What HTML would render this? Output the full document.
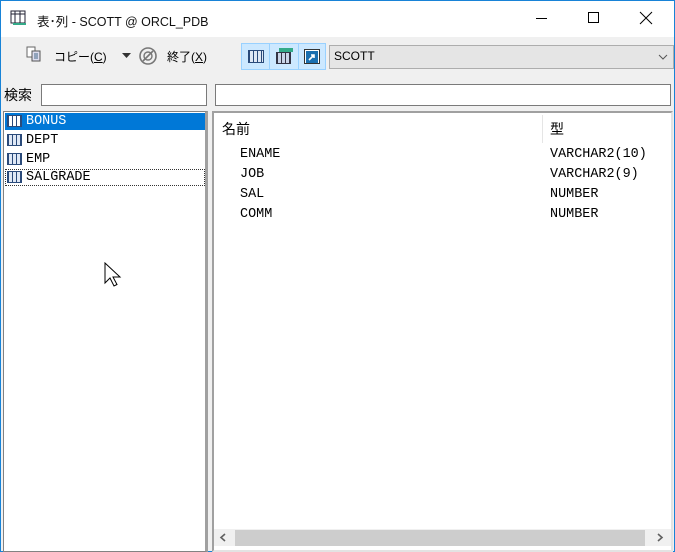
<!DOCTYPE html>
<html><head><meta charset="utf-8"><style>
*{box-sizing:border-box;margin:0;padding:0}
body{width:675px;height:552px;overflow:hidden;background:#fff;font-family:"Liberation Sans","Noto Sans CJK JP",sans-serif;position:relative}
.win{position:absolute;left:0;top:0;width:675px;height:552px;border:1px solid #1883d7;background:#f0f0f0}
.abs{position:absolute}
.title{left:0;top:0;width:673px;height:36px;background:#fff}
.t{font-size:12px;color:#000;white-space:nowrap}
.mono{font-family:"Liberation Mono","Noto Sans CJK JP",monospace;font-size:14px;transform:scaleX(.96);transform-origin:left;white-space:nowrap;line-height:17px}
.tbi{width:12px;height:11px;border:1px solid #2a4a7a;background:repeating-linear-gradient(90deg,#2a4a7a 0 1px,#dfe8f5 1px 4px)}
</style></head><body>
<div class="win">
<div class="abs title"></div>
<svg class="abs" style="left:9px;top:9px" width="18" height="16"><rect x="1" y="1" width="14" height="12" fill="#fff" stroke="#223"/><path d="M1 4h14M5 1v12M10 1v12" stroke="#223"/><rect x="3" y="13" width="13" height="2" fill="#3a8"/></svg>
<div class="abs t" style="left:36px;top:10px;font-size:12.5px;color:#111">表･列 - SCOTT @ ORCL_PDB</div>
<div class="abs" style="left:535px;top:17px;width:11px;height:1px;background:#000"></div>
<div class="abs" style="left:587px;top:11px;width:11px;height:11px;border:1px solid #000"></div>
<svg class="abs" style="left:638px;top:10px" width="14" height="14"><path d="M1 1L13 13M13 1L1 13" stroke="#000"/></svg>

<svg class="abs" style="left:25px;top:45px" width="16" height="16"><rect x="1" y="1" width="8" height="10" fill="#fff" stroke="#666"/><rect x="6" y="5" width="8" height="10" fill="#dde" stroke="#555"/><path d="M8 8h4M8 10h4M8 12h4" stroke="#468"/></svg>
<div class="abs t" style="left:53px;top:47px">コピー(<u>C</u>)</div>
<svg class="abs" style="left:121px;top:52px" width="9" height="6"><path d="M0 0h9L4.5 5z" fill="#333"/></svg>
<svg class="abs" style="left:137px;top:45px" width="20" height="20"><circle cx="10" cy="10" r="8" fill="none" stroke="#777" stroke-width="1.6"/><circle cx="10" cy="10" r="4" fill="none" stroke="#777" stroke-width="1.4"/><path d="M5 15L15 5" stroke="#777" stroke-width="1.6"/></svg>
<div class="abs t" style="left:166px;top:47px">終了(<u>X</u>)</div>
<div class="abs" style="left:240px;top:42px;width:85px;height:27px;background:#cce8ff;border:1px solid #99d1ff"></div>
<div class="abs" style="left:268px;top:43px;width:1px;height:25px;background:#99d1ff"></div>
<div class="abs" style="left:297px;top:43px;width:1px;height:25px;background:#99d1ff"></div>
<div class="abs tbi" style="left:247px;top:49px;width:16px;height:13px"></div>
<div class="abs tbi" style="left:275px;top:51px;width:15px;height:12px;border-color:#334;background:repeating-linear-gradient(90deg,#334 0 1px,#c9d4e8 1px 4px)"></div>
<div class="abs" style="left:278px;top:47px;width:14px;height:4px;background:#3a8"></div>
<div class="abs" style="left:303px;top:48px;width:16px;height:15px;border:1px solid #333;background:#fff"></div>
<svg class="abs" style="left:305px;top:50px" width="12" height="12"><rect width="12" height="12" fill="#1a6fb0"/><path d="M3 9L8 4M5 4h3v3" stroke="#fff" stroke-width="1.6" fill="none"/></svg>
<div class="abs" style="left:328px;top:44px;width:345px;height:24px;background:#e5e5e5;border:1px solid #adadad"></div>
<div class="abs t" style="left:333px;top:48px">SCOTT</div>
<svg class="abs" style="left:657px;top:53px" width="10" height="6"><path d="M1 1l4 4 4-4" stroke="#555" fill="none"/></svg>

<div class="abs t" style="left:3px;top:84px;font-size:14px">検索</div>
<div class="abs" style="left:40px;top:83px;width:166px;height:22px;background:#fff;border:1px solid #7a7a7a"></div>
<div class="abs" style="left:214px;top:83px;width:456px;height:22px;background:#fff;border:1px solid #7a7a7a"></div>

<div class="abs" style="left:2px;top:110px;width:205px;height:441px;background:#fff;border:1px solid #828282;border-right:3px solid #a0a0a0"></div>
<div class="abs" style="left:4px;top:112px;width:200px;height:17px;background:#0078d7"></div>
<div class="abs tbi" style="left:6px;top:114px;width:15px;height:12px;background:repeating-linear-gradient(90deg,#2a4a7a 0 1px,#fff 1px 4px)"></div>
<div class="abs mono" style="left:25px;top:112px;color:#fff">BONUS</div>
<div class="abs tbi" style="left:6px;top:133px;width:15px;height:12px"></div>
<div class="abs mono" style="left:25px;top:131px">DEPT</div>
<div class="abs tbi" style="left:6px;top:152px;width:15px;height:12px"></div>
<div class="abs mono" style="left:25px;top:150px">EMP</div>
<div class="abs" style="left:4px;top:168px;width:200px;height:17px;border:1px dotted #333"></div>
<div class="abs tbi" style="left:6px;top:170px;width:15px;height:12px"></div>
<div class="abs mono" style="left:25px;top:168px">SALGRADE</div>
<svg class="abs" style="left:103px;top:261px" width="20" height="30"><path d="M1 1v20l5-5 4 8 3-1.5-4-7.5h7z" fill="#fff" stroke="#000"/></svg>

<div class="abs" style="left:211px;top:110px;width:461px;height:441px;background:#fff;border:2px solid #a0a0a0;border-right-color:#e3e3e3;border-bottom-color:#e3e3e3"></div>
<div class="abs t" style="left:221px;top:118px;font-size:14px">名前</div>
<div class="abs" style="left:541px;top:114px;width:1px;height:28px;background:#e5e5e5"></div>
<div class="abs t" style="left:549px;top:118px;font-size:14px">型</div>
<div class="abs mono" style="left:239px;top:143px;line-height:20px">ENAME<br>JOB<br>SAL<br>COMM</div>
<div class="abs mono" style="left:549px;top:143px;line-height:20px">VARCHAR2(10)<br>VARCHAR2(9)<br>NUMBER<br>NUMBER</div>
<div class="abs" style="left:213px;top:528px;width:457px;height:17px;background:#f0f0f0"></div>
<div class="abs" style="left:234px;top:529px;width:410px;height:16px;background:#cdcdcd"></div>
<svg class="abs" style="left:218px;top:532px" width="8" height="9"><path d="M6 1L2 4.5 6 8" stroke="#606060" stroke-width="1.6" fill="none"/></svg>
<svg class="abs" style="left:655px;top:532px" width="8" height="9"><path d="M2 1l4 3.5L2 8" stroke="#606060" stroke-width="1.6" fill="none"/></svg>
</div>
</body></html>
